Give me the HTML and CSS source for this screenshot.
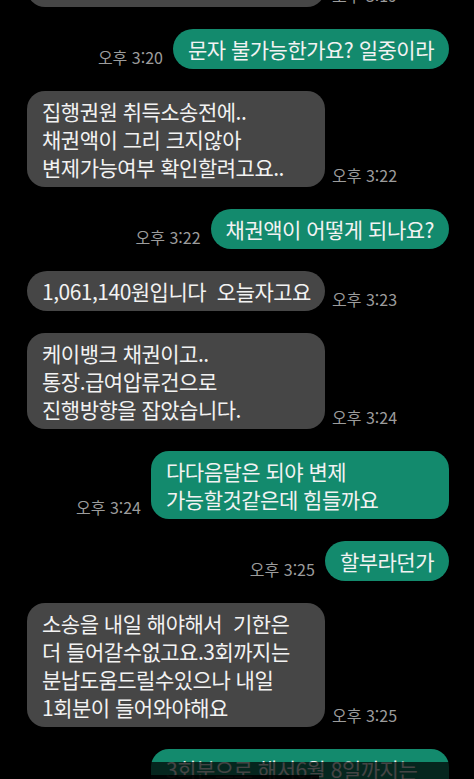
FILE: index.html
```html
<!DOCTYPE html>
<html lang="ko">
<head>
<meta charset="utf-8">
<title>메시지</title>
<link rel="stylesheet" href="styles.css">
</head>
<body>
<main class="chat">
  <div class="row in">
    <div class="bubble gray wide">네 확인해보겠습니다<br>잠시만요</div>
    <span class="ts">오후 3:19</span>
  </div>
  <div class="row out">
    <span class="ts">오후 3:20</span>
    <div class="bubble green">문자 불가능한가요? 일중이라</div>
  </div>
  <div class="row in">
    <div class="bubble gray wide">집행권원 취득소송전에..<br>채권액이 그리 크지않아<br>변제가능여부 확인할려고요..</div>
    <span class="ts">오후 3:22</span>
  </div>
  <div class="row out">
    <span class="ts">오후 3:22</span>
    <div class="bubble green">채권액이 어떻게 되나요?</div>
  </div>
  <div class="row in">
    <div class="bubble gray">1,061,140원입니다&nbsp; 오늘자고요</div>
    <span class="ts">오후 3:23</span>
  </div>
  <div class="row in">
    <div class="bubble gray wide">케이뱅크 채권이고..<br>통장.급여압류건으로<br>진행방향을 잡았습니다.</div>
    <span class="ts">오후 3:24</span>
  </div>
  <div class="row out">
    <span class="ts">오후 3:24</span>
    <div class="bubble green wide">다다음달은 되야 변제<br>가능할것같은데 힘들까요</div>
  </div>
  <div class="row out">
    <span class="ts">오후 3:25</span>
    <div class="bubble green">할부라던가</div>
  </div>
  <div class="row in">
    <div class="bubble gray wide">소송을 내일 해야해서&nbsp; 기한은<br>더 들어갈수없고요.3회까지는<br>분납도움드릴수있으나 내일<br>1회분이 들어와야해요</div>
    <span class="ts">오후 3:25</span>
  </div>
  <div class="row out">
    <div class="bubble green wide">3회분으로 해서6월 8일까지는<br>가능할까요</div>
  </div>
</main>
<div class="shade"><div class="shade-bar"></div></div>
</body>
</html>
```
FILE: styles.css
```css
html, body {
  margin: 0;
  padding: 0;
  background: #000;
  height: 779px;
  overflow: hidden;
}

body {
  font-family: "Noto Sans CJK KR", "Noto Sans", sans-serif;
  color: #f2f2f2;
  position: relative;
}

.chat {
  display: flex;
  flex-direction: column;
  gap: 22px;
  margin-top: -61px;
}

.row {
  display: flex;
  align-items: flex-end;
}

.row.in {
  justify-content: flex-start;
  padding-left: 27px;
  gap: 7px;
}

.row.out {
  justify-content: flex-end;
  padding-right: 25px;
  gap: 10px;
}

.bubble {
  box-sizing: border-box;
  max-width: 298px;
  padding: 6px 15px;
  font-size: 21px;
  font-weight: 400;
  line-height: 28px;
  letter-spacing: -0.5px;
  border-radius: 20px;
  white-space: nowrap;
}

.bubble.wide {
  width: 298px;
  border-radius: 18px;
}

.bubble.gray {
  background: #464646;
}

.bubble.green {
  background: #138a6d;
}

.ts {
  font-size: 16px;
  line-height: 16px;
  color: #9c9c9c;
  margin-bottom: 4px;
  white-space: nowrap;
}

.shade {
  position: absolute;
  left: 0;
  right: 0;
  top: 762px;
  height: 17px;
  background: rgba(0, 0, 0, 0.72);
  display: flex;
  justify-content: center;
  align-items: flex-end;
}

.shade-bar {
  width: 198px;
  height: 4px;
  margin-right: 34px;
  background: rgba(0, 0, 0, 0.85);
}
```
